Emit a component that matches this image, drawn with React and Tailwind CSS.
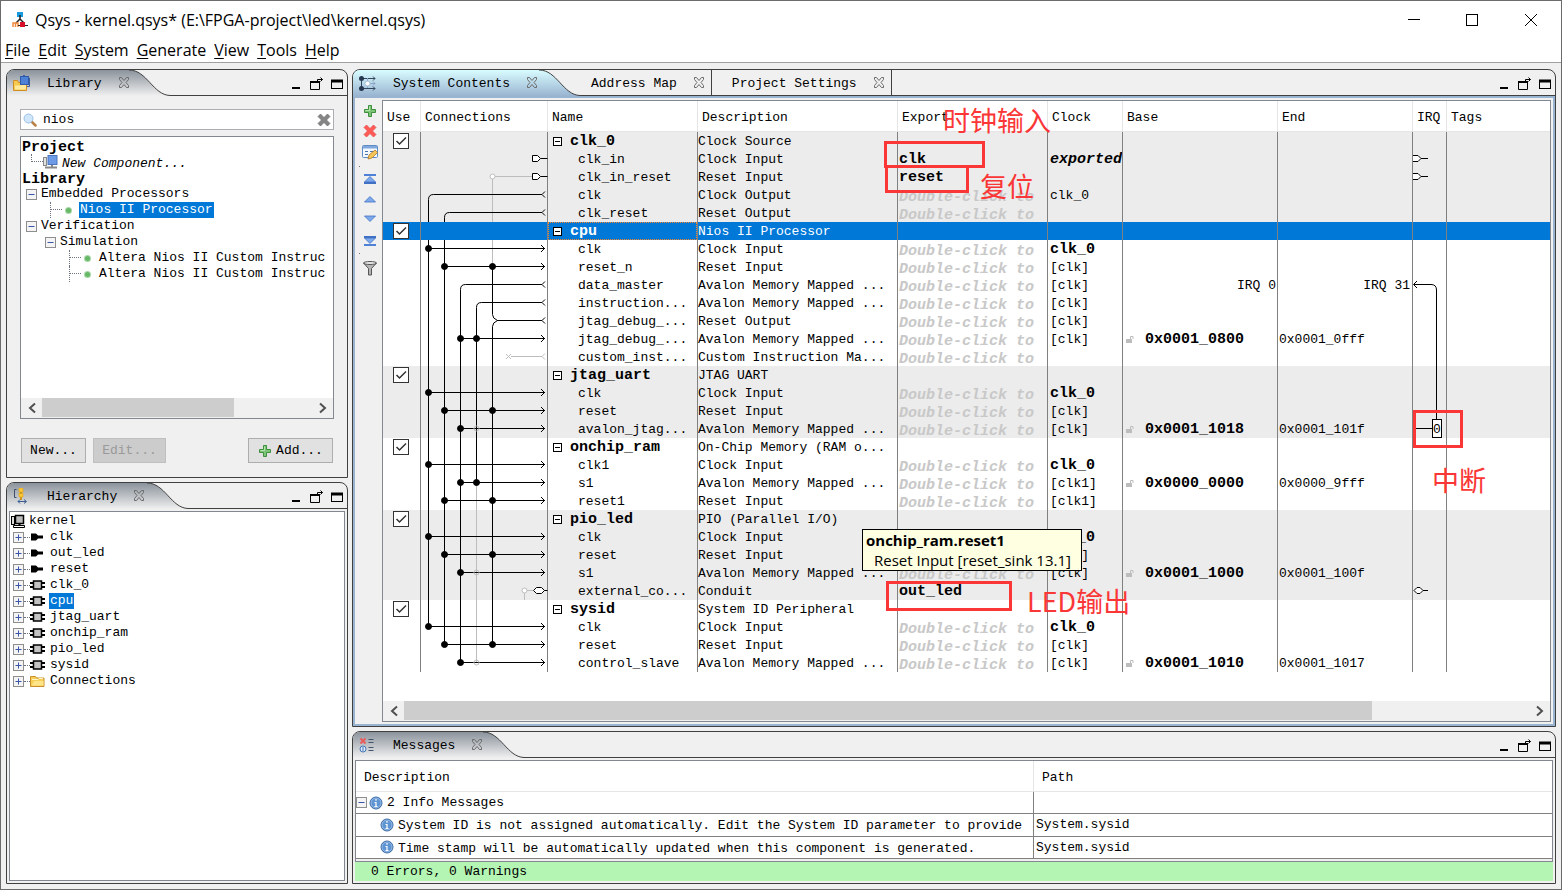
import { Fragment } from "react";

const EXPORT_HINT = "Double-click to";

const modules = [
    {
        name: "clk_0",
        description: "Clock Source",
        ports: [
            { name: "clk_in", description: "Clock Input", exported: "clk", clock: "exported", clockStyle: "exported" },
            { name: "clk_in_reset", description: "Reset Input", exported: "reset" },
            { name: "clk", description: "Clock Output", clock: "clk_0" },
            { name: "clk_reset", description: "Reset Output" },
        ],
    },
    {
        name: "cpu",
        description: "Nios II Processor",
        selected: true,
        ports: [
            { name: "clk", description: "Clock Input", clock: "clk_0", clockStyle: "bold" },
            { name: "reset_n", description: "Reset Input", clock: "[clk]" },
            { name: "data_master", description: "Avalon Memory Mapped ...", clock: "[clk]", irqFrom: "IRQ 0", irqTo: "IRQ 31" },
            { name: "instruction...", description: "Avalon Memory Mapped ...", clock: "[clk]" },
            { name: "jtag_debug_...", description: "Reset Output", clock: "[clk]" },
            { name: "jtag_debug_...", description: "Avalon Memory Mapped ...", clock: "[clk]", base: "0x0001_0800", end: "0x0001_0fff" },
            { name: "custom_inst...", description: "Custom Instruction Ma..." },
        ],
    },
    {
        name: "jtag_uart",
        description: "JTAG UART",
        ports: [
            { name: "clk", description: "Clock Input", clock: "clk_0", clockStyle: "bold" },
            { name: "reset", description: "Reset Input", clock: "[clk]" },
            { name: "avalon_jtag...", description: "Avalon Memory Mapped ...", clock: "[clk]", base: "0x0001_1018", end: "0x0001_101f" },
        ],
    },
    {
        name: "onchip_ram",
        description: "On-Chip Memory (RAM o...",
        ports: [
            { name: "clk1", description: "Clock Input", clock: "clk_0", clockStyle: "bold" },
            { name: "s1", description: "Avalon Memory Mapped ...", clock: "[clk1]", base: "0x0000_0000", end: "0x0000_9fff" },
            { name: "reset1", description: "Reset Input", clock: "[clk1]" },
        ],
    },
    {
        name: "pio_led",
        description: "PIO (Parallel I/O)",
        ports: [
            { name: "clk", description: "Clock Input", clock: "clk_0", clockStyle: "bold" },
            { name: "reset", description: "Reset Input", clock: "[clk]" },
            { name: "s1", description: "Avalon Memory Mapped ...", clock: "[clk]", base: "0x0001_1000", end: "0x0001_100f" },
            { name: "external_co...", description: "Conduit", exported: "out_led" },
        ],
    },
    {
        name: "sysid",
        description: "System ID Peripheral",
        ports: [
            { name: "clk", description: "Clock Input", clock: "clk_0", clockStyle: "bold" },
            { name: "reset", description: "Reset Input", clock: "[clk]" },
            { name: "control_slave", description: "Avalon Memory Mapped ...", clock: "[clk]", base: "0x0001_1010", end: "0x0001_1017" },
        ],
    },
];

const hierarchy = [
    { name: "clk", icon: "port" },
    { name: "out_led", icon: "port" },
    { name: "reset", icon: "port" },
    { name: "clk_0", icon: "chip" },
    { name: "cpu", icon: "chip", selected: true },
    { name: "jtag_uart", icon: "chip" },
    { name: "onchip_ram", icon: "chip" },
    { name: "pio_led", icon: "chip" },
    { name: "sysid", icon: "chip" },
    { name: "Connections", icon: "folder" },
];

const clockClasses = {
    bold: "font-bold text-[15px]",
    exported: "font-bold italic text-[15px]",
};

/**
 * Icons
 */
const CloseIcon = () => (
    <svg width="12" height="12" viewBox="0 0 12 12" fill="none" stroke="#6b6b6b" strokeWidth="1">
        <path d="M1.5 .5h2L6 3.5l2.500-3h2v2L8 5.500l2.500 3v2h-2L6 7.500l-2.500 3h-2v-2L4 5.500l-2.500-3z" />
    </svg>
);

const PlusIcon = () => (
    <svg width="14" height="14" viewBox="0 0 14 14">
        <path d="M5.500 1.500h3v4h4v3h-4v4h-3v-4h-4v-3h4z" fill="#7cc576" stroke="#3f8f3f" />
        <path d="M6.500 2.500v4H2.500" fill="none" stroke="#b5e6ae" />
    </svg>
);

const RemoveIcon = () => (
    <svg width="14" height="14" viewBox="0 0 14 14">
        <path d="M3.500 1L7 4.500 10.500 1 13 3.500 9.500 7l3.500 3.500-2.500 2.500L7 9.500 3.500 13 1 10.500 4.500 7 1 3.500z" fill="#ff5a55" stroke="#e04a4a" strokeWidth=".7" />
    </svg>
);

const ClearIcon = () => (
    <svg width="14" height="14" viewBox="0 0 14 14">
        <path d="M3.500 1L7 4.500 10.500 1 13 3.500 9.500 7l3.500 3.500-2.500 2.500L7 9.500 3.500 13 1 10.500 4.500 7 1 3.500z" fill="#858585" stroke="#6c6c6c" strokeWidth=".7" />
    </svg>
);

const EditIcon = () => (
    <svg width="16" height="16" viewBox="0 0 16 16">
        <rect x=".5" y="1.500" width="15" height="12" rx="1" fill="#f4f9ff" stroke="#5f8cc4" />
        <path d="M1 2h14v2.500H1z" fill="#7fa9dd" />
        <path d="M3 7.500h3M3 10.500h3M8 7.500h4" stroke="#4a74ac" />
        <path d="M6 15l1-4 6-5 2.500 2.500L10 14z" fill="#f6c55a" stroke="#b07a2a" strokeWidth=".8" />
    </svg>
);

const MoveIcon = ({ up, bar }) => (
    <svg width="14" height="12" viewBox="0 0 14 12">
        <g transform={up ? undefined : "matrix(1 0 0 -1 0 12)"}>
            {bar && <rect x="1" y="1" width="12" height="2" fill="#4f82d6" />}
            <path d="M7 3.500L12.500 9H1.500z" fill="#7eaaec" stroke="#3f70c4" strokeWidth=".8" />
            {bar && <path d="M1 9h12v2H1z" fill="#3f70c4" />}
        </g>
    </svg>
);

const FilterIcon = () => (
    <svg width="16" height="16" viewBox="0 0 16 16">
        <path d="M1.500 3l5 5.500V15h3V8.500l5-5.500z" fill="#b5b5b5" stroke="#555" />
        <ellipse cx="8" cy="3" rx="6.500" ry="1.500" fill="#e8e8e8" stroke="#555" />
    </svg>
);

const SearchIcon = () => (
    <svg width="14" height="14" viewBox="0 0 14 14">
        <path d="M8.500 8.500l4 4" stroke="#b98347" strokeWidth="2.500" strokeLinecap="round" />
        <circle cx="5.500" cy="5.500" r="4.500" fill="#cfe6fb" stroke="#9cc0e6" />
    </svg>
);

const FolderIcon = () => (
    <svg width="15" height="12" viewBox="0 0 15 12">
        <path d="M.5 11.500V1.500h5l1 1.500h7.500v8.500z" fill="#f7cf57" stroke="#c9902d" />
        <path d="M2 4.500h6l1-1h4" stroke="#fff5c8" fill="none" />
        <path d="M2 10L4 6h9.500v4.500H2z" fill="#ffe58a" />
    </svg>
);

const LibraryIcon = () => (
    <svg width="18" height="16" viewBox="0 0 18 16">
        <path d="M.5 15.500v-10h4l1 2h8v8z" fill="#f6c94f" stroke="#d18d24" />
        <path d="M2 10.500h5l1-1h5v5H2z" fill="#ffe99c" />
        <rect x="7.500" y="1.500" width="8" height="8" fill="#4f82d6" stroke="#2f5ca8" />
        <path d="M10 .5h2M14 11.500h2.500V3" fill="none" stroke="#3a5f9c" />
    </svg>
);

const HierarchyIcon = () => (
    <svg width="16" height="16" viewBox="0 0 16 16">
        <path d="M3.500 1.500h-2v8h2" fill="none" stroke="#3d4f6b" />
        <path d="M6 0h4v4H6zM6 5h4v4H6z" fill="#f9c834" stroke="#e0a21c" strokeWidth=".6" />
        <path d="M8 4v2M8 9v3" stroke="#d09a20" strokeWidth="2" />
        <path d="M5 13.500h8M11 11.500l2.500 2-2.500 2M7 11.500l-2 2 2 2" fill="none" stroke="#3c5c92" />
    </svg>
);

const ContentsIcon = () => (
    <svg width="18" height="16" viewBox="0 0 18 16">
        <path d="M3 3.500h13M3 13.500h13M2.500 3v10M14 1.500l2 2-2 2M14 11.500l2 2-2 2" fill="none" stroke="#33455c" />
        <path d="M8.500 3v10M9 8.500h7M14 6.500l2 2-2 2" fill="none" stroke="#8ba5c6" />
        <circle cx="2.500" cy="3.500" r="2.500" fill="#26374e" />
        <circle cx="2.500" cy="13.500" r="2.500" fill="#26374e" />
        <circle cx="8.500" cy="8.500" r="2.500" fill="#fff" stroke="#a9bfdb" />
    </svg>
);

const MessagesIcon = () => (
    <svg width="16" height="16" viewBox="0 0 16 16">
        <path d="M1.500 1.500l5 5M6.500 1.500l-5 5" stroke="#ea5b5b" strokeWidth="2" />
        <circle cx="4" cy="12" r="3" fill="#dbe9fb" stroke="#4575b5" />
        <path d="M4 10v4" stroke="#4575b5" />
        <path d="M9.500 2.500h5M9.500 5.500h5M9.500 10.500h5M9.500 13.500h5" stroke="#44546a" />
    </svg>
);

const ComponentIcon = () => (
    <svg width="15" height="14" viewBox="0 0 15 14">
        <rect x=".5" y="2.500" width="3" height="8" fill="#e3e3e3" stroke="#888" />
        <rect x="5" y=".5" width="9" height="9" fill="#6d9be6" stroke="#4a76bd" />
        <path d="M2 12.500h12M9 10v2" stroke="#888" strokeWidth="2" />
    </svg>
);

const KernelIcon = () => (
    <svg width="14" height="14" viewBox="0 0 14 14" stroke="#000">
        <rect x=".5" y="2.500" width="3" height="8" fill="#ddd" />
        <rect x="4.500" y="1.500" width="8" height="8" fill="#bdbdbd" strokeWidth="1.500" />
        <path d="M2.500 11.500h11v2h-11z" fill="#fff" />
        <path d="M8.500 9.500v2" strokeWidth="2" />
    </svg>
);

const InfoIcon = () => (
    <svg width="14" height="14" viewBox="0 0 14 14">
        <circle cx="7" cy="7" r="6" fill="#5f94d2" stroke="#3a679f" />
        <circle cx="7" cy="7" r="5" fill="none" stroke="#a9c9ec" strokeWidth=".7" />
        <path d="M7 6v4.500M7 3v1.700M5.500 6.500H7M5.500 10.500h3" stroke="#fff" strokeWidth="1.200" />
    </svg>
);

const LockIcon = () => (
    <svg width="8" height="9" viewBox="0 0 8 9">
        <rect y="4" width="6" height="4" fill="#bdbdbd" />
        <path d="M4.500 4V1.500h2.500V4" fill="none" stroke="#bdbdbd" />
    </svg>
);

const NodeIcon = ({ type }) => {
    if (type === "folder") return <FolderIcon />;
    return (
        <svg width="15" height="10" viewBox="0 0 15 10">
            {type === "port" ? (
                <path d="M1 1.500h5l2 2h5v3H8l-2 2H1z" fill="#000" />
            ) : (
                <>
                    <path d="M0 3h15M0 7h15" stroke="#000" strokeWidth="2" />
                    <rect x="3.500" y="1" width="8" height="8" fill="#c3c3c3" stroke="#000" strokeWidth="1.500" />
                </>
            )}
        </svg>
    );
};

const TreeBox = ({ open }) => (
    <svg width="11" height="11" viewBox="0 0 11 11" className="shrink-0">
        <rect x=".5" y=".5" width="10" height="10" fill="#f4f4f4" stroke="#8e8e8e" />
        <path d={open ? "M2.500 5.500h6" : "M2.500 5.500h6M5.500 2.500v6"} stroke="#3a55a8" />
    </svg>
);

const Chevron = ({ right }) => (
    <svg width="8" height="12" viewBox="0 0 8 12" fill="none" stroke="#505050" strokeWidth="2">
        <path d={right ? "M1 1.500L6 6 1 10.500" : "M7 1.500L2 6l5 4.500"} />
    </svg>
);

/**
 * Panel frame: sloped title tab, extra tabs and window buttons
 */
const PanelHeader = ({ id, icon, title, slopeAt, blue = false, children }) => (
    <div className="flex h-[26px]">
        <div className="relative shrink-0">
            <svg width={slopeAt + 41} height="26" viewBox={`0 0 ${slopeAt + 41} 26`} className="block rounded-tl-[7px]">
                <defs>
                    <linearGradient id={id} x1="0" y1="0" x2="0" y2="1">
                        <stop offset="0" stopColor={blue ? "#d9fcff" : "#8a929b"} />
                        <stop offset="1" stopColor={blue ? "#99b4d1" : "#f0f0f0"} />
                    </linearGradient>
                </defs>
                <path d={`M0 0H${slopeAt}c18 0 24 25 41 25.500V26H0z`} fill={`url(#${id})`} />
                <path d={`M${slopeAt} 0c18 0 24 25 41 25.500`} fill="none" stroke="#404040" />
            </svg>
            <div className="absolute inset-y-0 left-1.5 flex items-center gap-4">
                <span className="w-[18px]">{icon}</span>
                <h2 className="pt-0.5">{title}</h2>
                <button aria-label={`Close ${title}`}>
                    <CloseIcon />
                </button>
            </div>
        </div>
        {children}
        <div className="flex flex-1 items-center justify-end gap-1.5 border-b border-[#404040] pt-0.5 pr-[3px]">
            <button aria-label="Minimize panel">
                <svg width="14" height="14" viewBox="0 0 14 14"><path d="M3 11h8" stroke="#000" strokeWidth="2" /></svg>
            </button>
            <button aria-label="Detach panel">
                <svg width="15" height="14" viewBox="0 0 15 14" fill="none" stroke="#000">
                    <path d="M1.500 5v7.500h9V5M1 5.500h10" />
                    <path d="M1 5h10" strokeWidth="2" />
                    <path d="M8.500 4.500V2.500h5M11.500.5l2 2-2 2" />
                </svg>
            </button>
            <button aria-label="Maximize panel">
                <svg width="14" height="14" viewBox="0 0 14 14" fill="none" stroke="#000">
                    <rect x="1.500" y="3.500" width="11" height="8" />
                    <path d="M1 4h12" strokeWidth="3" />
                </svg>
            </button>
        </div>
    </div>
);

const InactiveTab = ({ title, className }) => (
    <div className={`flex items-center gap-4 border-r border-b border-[#404040] pr-1.5 ${className}`}>
        <button className="pt-0.5">{title}</button>
        <button aria-label={`Close ${title}`}>
            <CloseIcon />
        </button>
    </div>
);

const Scrollbar = ({ thumb }) => (
    <div className="flex h-5 items-stretch bg-[#f0f0f0]">
        <button aria-label="Scroll left" className="flex w-[21px] items-center justify-center">
            <Chevron />
        </button>
        <div className="flex-1">
            <div className={`h-[19px] bg-[#cdcdcd] ${thumb}`} />
        </div>
        <button aria-label="Scroll right" className="flex w-[21px] items-center justify-center">
            <Chevron right />
        </button>
    </div>
);

/**
 * Left column
 */
const LibraryLeaf = ({ children, indent }) => (
    <li className={`flex h-4 items-center ${indent}`}>
        <span className="h-4 w-3 shrink-0 self-start border-l border-dotted border-gray-500">
            <span className="block h-2 border-b border-dotted border-gray-500" />
        </span>
        <span className="mr-2 ml-1 size-[5px] shrink-0 rounded-full bg-[#68b868] ring-1 ring-[#a8d8a8]" />
        {children}
    </li>
);

const LibraryPanel = () => (
    <section className="flex h-[409px] flex-col rounded-t-[8px] border border-[#404040] bg-[#f0f0f0]">
        <PanelHeader id="tab-library" icon={<LibraryIcon />} title="Library" slopeAt={122} />
        <div className="flex flex-1 flex-col px-[13px] pt-[13px]">
            <div className="flex h-[21px] items-center gap-1.5 border border-[#abadb3] bg-white px-0.5">
                <SearchIcon />
                <input aria-label="Search library" defaultValue="nios" className="min-w-0 flex-1 outline-none" />
                <button aria-label="Clear search"><ClearIcon /></button>
            </div>
            <div className="mt-1.5 flex h-[283px] flex-col border border-[#828790] bg-white">
                <ul className="flex-1 overflow-hidden pt-px leading-4 whitespace-nowrap">
                    <li className="h-4 pl-px text-[15px] leading-5 font-bold">Project</li>
                    <li className="flex h-4 items-center pl-2.5">
                        <span className="h-2 w-3 self-start border-b border-l border-dotted border-gray-500" />
                        <ComponentIcon />
                        <span className="pt-1 pl-1 italic">New Component...</span>
                    </li>
                    <li className="h-4 pl-px text-[15px] leading-5 font-bold">Library</li>
                    <li className="flex h-4 items-center gap-1 pl-[5px]"><TreeBox open />Embedded Processors</li>
                    <LibraryLeaf indent="pl-[29px]">
                        <span className="bg-[#0078d7] px-px text-white">Nios II Processor</span>
                    </LibraryLeaf>
                    <li className="flex h-4 items-center gap-1 pl-[5px]"><TreeBox open />Verification</li>
                    <li className="flex h-4 items-center gap-1 pl-6"><TreeBox open />Simulation</li>
                    <LibraryLeaf indent="pl-12"><span className="px-px">Altera Nios II Custom Instruc</span></LibraryLeaf>
                    <LibraryLeaf indent="pl-12"><span className="px-px">Altera Nios II Custom Instruc</span></LibraryLeaf>
                </ul>
                <Scrollbar thumb="w-[71%]" />
            </div>
            <div className="mt-[19px] flex h-[25px] gap-[7px] px-px">
                <button className="w-[65px] border border-[#adadad] bg-[#e1e1e1]">New...</button>
                <button disabled className="w-[73px] border border-[#bfbfbf] bg-[#cccccc] text-[#9a9a9a]">Edit...</button>
                <button className="ml-auto flex w-[85px] items-center justify-center gap-1 border border-[#adadad] bg-[#e1e1e1]">
                    <PlusIcon />
                    Add...
                </button>
            </div>
        </div>
    </section>
);

const HierarchyPanel = () => (
    <section className="flex flex-1 flex-col rounded-t-[8px] border border-[#404040] bg-[#f0f0f0]">
        <PanelHeader id="tab-hierarchy" icon={<HierarchyIcon />} title="Hierarchy" slopeAt={140} />
        <div className="m-0.5 flex-1 border border-[#828790] bg-white">
            <div className="flex h-[17px] items-center gap-1 pl-px"><KernelIcon />kernel</div>
            <ul>
                {hierarchy.map((node) => (
                    <li key={node.name} className="flex h-4 items-center pl-[3px]">
                        <TreeBox />
                        <span className="w-[6px] border-b border-dotted border-gray-500" />
                        <NodeIcon type={node.icon} />
                        <span className={node.selected ? "ml-1 bg-[#0078d7] px-px leading-4 text-white" : "ml-1 px-px leading-4"}>
                            {node.name}
                        </span>
                    </li>
                ))}
            </ul>
        </div>
    </section>
);

/**
 * Wiring drawn over the Connections column, one 18px step per row
 */
const rowY = (row) => row * 18 + 8.5;

const wires = [
    { row: 6, dots: [7.5] },
    { row: 7, dots: [23.5, 71.5] },
    { row: 11, dots: [39.5, 55.5] },
    { row: 14, dots: [7.5] },
    { row: 15, dots: [23.5, 71.5] },
    { row: 16, dots: [39.5], open: 55.5 },
    { row: 18, dots: [7.5] },
    { row: 19, dots: [39.5, 55.5] },
    { row: 20, dots: [23.5, 71.5] },
    { row: 22, dots: [7.5] },
    { row: 23, dots: [23.5, 71.5] },
    { row: 24, dots: [39.5], open: 55.5 },
    { row: 27, dots: [7.5] },
    { row: 28, dots: [23.5, 71.5] },
    { row: 29, dots: [39.5], open: 55.5 },
];

const sources = [
    { row: 3, x: 7.5, last: 27 },
    { row: 4, x: 23.5, last: 28 },
    { row: 8, x: 39.5, last: 29 },
    { row: 9, x: 55.5, last: 19 },
];

const ConnectionsDiagram = () => (
    <svg width="127" height="540" viewBox="0 0 127 540" fill="none" stroke="#000" className="pointer-events-none absolute top-[31px] left-[38px]">
        <path d={`M71.500 ${rowY(2)}V${rowY(7)}M74 ${rowY(2)}H111M55.500 ${rowY(19)}V${rowY(29)}`} stroke="#bdbdbd" />
        <circle cx="71.500" cy={rowY(2)} r="2.500" fill="#fff" stroke="#bdbdbd" />
        {[1, 2].map((row) => (
            <path key={row} d={`M111.500 ${rowY(row) - 3}h5l3 3-3 3h-5zM119.500 ${rowY(row)}h7`} fill="#fff" />
        ))}
        {sources.map(({ row, x, last }) => (
            <path key={row} d={`M124 ${rowY(row) - 3}l-3 3 3 3M121 ${rowY(row)}H${x + 5}q-5 0-5 5V${rowY(last)}`} />
        ))}
        <path d={`M71.500 ${rowY(7)}V${rowY(10) - 6}q0 4 5 6q-5 2-5 6V${rowY(28)}M76 ${rowY(10)}H121M124 ${rowY(10) - 3}l-3 3 3 3`} />
        <path d={`M85 ${rowY(12) - 2.5}l5 5M90 ${rowY(12) - 2.5}l-5 5M90 ${rowY(12)}H121M124 ${rowY(12) - 3}l-3 3 3 3`} stroke="#bdbdbd" />
        {wires.map(({ row, dots, open }) => (
            <Fragment key={row}>
                <path d={`M${dots[0]} ${rowY(row)}H124M120 ${rowY(row) - 3.5}l3.500 3.500-3.500 3.500`} />
                {open && <circle cx={open} cy={rowY(row)} r="2.500" stroke="#bdbdbd" />}
                {dots.map((x) => (
                    <circle key={x} cx={x} cy={rowY(row)} r="3" fill="#000" />
                ))}
            </Fragment>
        ))}
        <path d={`M103.500 ${rowY(25)}V468M106 ${rowY(25)}h6`} stroke="#bdbdbd" />
        <circle cx="103.500" cy={rowY(25)} r="2.500" fill="#fff" stroke="#bdbdbd" />
        <path d={`M112.500 ${rowY(25)}l3-3h5l3 3-3 3h-5zM123.500 ${rowY(25)}h3`} fill="#fff" />
        <path d="M0 90h126v18H0z" fill="#0078d7" stroke="none" />
    </svg>
);

const IrqDiagram = () => (
    <svg width="33" height="540" viewBox="0 0 33 540" fill="none" stroke="#000" className="pointer-events-none absolute top-[31px] left-[1030px]">
        {[1, 2].map((row) => (
            <path key={row} d={`M0 ${rowY(row) - 3}h5l3 3-3 3H0M8 ${rowY(row)}h7`} fill="#fff" />
        ))}
        <path d={`M4 ${rowY(8) - 3.5}l-3.500 3.500 3.500 3.500M1 ${rowY(8)}h17q5.500 0 5.500 5.500V288M3 ${rowY(16)}h16`} />
        <rect x="19.500" y="287.500" width="9" height="18" fill="#fff" />
        <text x="20" y="301" fill="#000" stroke="none" fontSize="13">0</text>
        <path d={`M1 ${rowY(25)}l3-3h3l3 3-3 3H4zM10 ${rowY(25)}h5`} fill="#fff" />
    </svg>
);

/**
 * System contents
 */
const UseCheckbox = ({ name }) => (
    <label className="relative ml-2.5 block size-4">
        <input type="checkbox" defaultChecked aria-label={`Use ${name}`} className="block size-4 appearance-none border border-[#333] bg-white" />
        <svg viewBox="0 0 16 16" className="pointer-events-none absolute inset-0" fill="none" stroke="#333" strokeWidth="1.500">
            <path d="M3.500 8l3 3L13 4.500" />
        </svg>
    </label>
);

const Cell = ({ className = "", children }) => (
    <td className={`h-[18px] overflow-hidden border-r border-[#808080] p-0 leading-[18px] last:border-r-0 ${className}`}>{children}</td>
);

// Text sits one pixel under the row's middle
const CellText = ({ className = "", children }) => (
    <div className={`h-[18px] pt-px leading-[18px] ${className}`}>{children}</div>
);

const ModuleRows = ({ module, shaded }) => {
    const shade = shaded ? "bg-[#ececec]" : "bg-white";
    return (
        <>
            <tr className={module.selected ? "bg-[#0078d7] text-white" : shade}>
                <Cell><UseCheckbox name={module.name} /></Cell>
                <Cell />
                <Cell>
                    <div className={module.selected ? "flex h-[18px] items-center gap-2 pl-[5px] outline-1 -outline-offset-1 outline-dotted outline-[#ff8728]" : "flex h-[18px] items-center gap-2 pl-[5px]"}>
                        <button aria-label={`Collapse ${module.name}`}>
                            <svg width="9" height="9" viewBox="0 0 9 9" className="block">
                                <rect x=".5" y=".5" width="8" height="8" fill="#fff" stroke="#000" />
                                <path d="M2 4.500h5" stroke="#000" />
                            </svg>
                        </button>
                        <span className="pt-0.5 text-[15px] font-bold">{module.name}</span>
                    </div>
                </Cell>
                <Cell><CellText>{module.description}</CellText></Cell>
                <Cell /><Cell /><Cell /><Cell /><Cell /><Cell />
            </tr>
            {module.ports.map((port, idx) => (
                <tr key={idx} className={shade}>
                    <Cell />
                    <Cell />
                    <Cell><CellText className="pl-[30px]">{port.name}</CellText></Cell>
                    <Cell><CellText>{port.description}</CellText></Cell>
                    <Cell className="pl-px text-[15px] font-bold">
                        {port.exported ? (
                            <CellText>{port.exported}</CellText>
                        ) : (
                            <div className="h-[18px] leading-[23px] text-[#c8c8c8] italic">{EXPORT_HINT}</div>
                        )}
                    </Cell>
                    <Cell className={clockClasses[port.clockStyle]}>
                        <CellText className="pl-0.5">{port.clock}</CellText>
                    </Cell>
                    <Cell>
                        {port.irqFrom && <CellText className="pr-px text-right">{port.irqFrom}</CellText>}
                        {port.base && (
                            <div className="flex h-[18px] items-center gap-[11px] pl-[3px] text-[15px] font-bold">
                                <LockIcon />
                                <span className="pt-0.5">{port.base}</span>
                            </div>
                        )}
                    </Cell>
                    <Cell>
                        {port.irqTo ? (
                            <CellText className="pr-0.5 text-right">{port.irqTo}</CellText>
                        ) : (
                            <CellText className="pl-px">{port.end}</CellText>
                        )}
                    </Cell>
                    <Cell />
                    <Cell />
                </tr>
            ))}
        </>
    );
};

const columns = ["Use", "Connections", "Name", "Description", "Export", "Clock", "Base", "End", "IRQ", "Tags"];

const SystemTable = () => (
    <div className="relative flex-1 overflow-hidden">
        <table className="w-full table-fixed border-separate border-spacing-0 whitespace-nowrap">
            <colgroup>
                <col className="w-[38px]" />
                <col className="w-[127px]" />
                <col className="w-[150px]" />
                <col className="w-[200px]" />
                <col className="w-[150px]" />
                <col className="w-[75px]" />
                <col className="w-[155px]" />
                <col className="w-[135px]" />
                <col className="w-[34px]" />
                <col />
            </colgroup>
            <thead>
                <tr>
                    {columns.map((column) => (
                        <th key={column} className="h-[31px] border-r border-b border-[#e5e5e5] p-0 pt-[3px] pl-1 text-left font-normal last:border-r-0">{column}</th>
                    ))}
                </tr>
            </thead>
            <tbody>
                {modules.map((module, idx) => (
                    <ModuleRows key={module.name} module={module} shaded={idx % 2 === 0} />
                ))}
            </tbody>
        </table>
        <ConnectionsDiagram />
        <IrqDiagram />
    </div>
);

const Toolbar = () => (
    <div className="flex w-[27px] flex-col items-center gap-1.5 pt-1.5 pl-0.5">
        <button aria-label="Add"><PlusIcon /></button>
        <button aria-label="Remove"><RemoveIcon /></button>
        <button aria-label="Edit"><EditIcon /></button>
        <span className="mr-5 size-px bg-gray-500" />
        <button aria-label="Move to top"><MoveIcon up bar /></button>
        <button aria-label="Move up" className="pt-0.5"><MoveIcon up /></button>
        <button aria-label="Move down" className="pt-0.5"><MoveIcon /></button>
        <button aria-label="Move to bottom" className="pt-1"><MoveIcon bar /></button>
        <span className="mr-5 size-px bg-gray-500" />
        <button aria-label="Filter"><FilterIcon /></button>
    </div>
);

const SystemPanel = () => (
    <section className="flex flex-1 flex-col rounded-t-[8px] border border-[#404040] bg-[#f0f0f0]">
        <PanelHeader id="tab-system" icon={<ContentsIcon />} title="System Contents" slopeAt={186} blue>
            <InactiveTab title="Address Map" className="pl-[11px]" />
            <InactiveTab title="Project Settings" className="pl-5" />
        </PanelHeader>
        <div className="flex flex-1 border-2 border-[#99b4d1]">
            <Toolbar />
            <div className="mt-0.5 mr-0.5 mb-0.5 flex min-w-0 flex-1 flex-col border border-[#828790] bg-white">
                <SystemTable />
                <Scrollbar thumb="w-[86%]" />
            </div>
        </div>
    </section>
);

/**
 * Messages
 */
const messages = [
    "System ID is not assigned automatically. Edit the System ID parameter to provide",
    "Time stamp will be automatically updated when this component is generated.",
];

const MessagesPanel = () => (
    <section className="flex h-[153px] flex-col rounded-t-[8px] border border-[#404040] bg-[#f0f0f0]">
        <PanelHeader id="tab-messages" icon={<MessagesIcon />} title="Messages" slopeAt={130} />
        <div className="m-0.5 flex flex-1 flex-col">
            <div className="flex-1 border border-[#828790]">
                <table className="w-full table-fixed border-separate border-spacing-0 bg-white whitespace-nowrap">
                    <colgroup>
                        <col className="w-[678px]" />
                        <col />
                    </colgroup>
                    <thead>
                        <tr className="text-left">
                            <th className="h-[31px] border-r border-b border-[#e5e5e5] p-0 pt-[3px] pl-2 font-normal">Description</th>
                            <th className="h-[31px] border-b border-[#e5e5e5] p-0 pt-[3px] pl-2 font-normal">Path</th>
                        </tr>
                    </thead>
                    <tbody>
                        <tr>
                            <td className="h-[22px] border-r border-b border-[#808080] p-0">
                                <div className="flex items-center gap-1">
                                    <span className="flex items-center gap-0.5"><TreeBox open /><InfoIcon /></span>
                                    2 Info Messages
                                </div>
                            </td>
                            <td className="border-b border-[#808080] p-0" />
                        </tr>
                        {messages.map((message) => (
                            <tr key={message}>
                                <td className="h-[22px] overflow-hidden border-r border-b border-[#808080] p-0 pl-6">
                                    <div className="flex items-center gap-1">
                                        <span className="shrink-0"><InfoIcon /></span>
                                        <span className="pt-0.5">{message}</span>
                                    </div>
                                </td>
                                <td className="border-b border-[#808080] p-0 pl-0.5">System.sysid</td>
                            </tr>
                        ))}
                    </tbody>
                </table>
            </div>
            <div className="h-[19px] bg-[#b4f5b4] pl-4 leading-5">0 Errors, 0 Warnings</div>
        </div>
    </section>
);

/**
 * Window chrome
 */
const menus = ["File", "Edit", "System", "Generate", "View", "Tools", "Help"];

const TitleBar = () => (
    <header className="border-b border-[#a0a0a0] bg-white font-['Open_Sans',sans-serif] text-[16px]">
        <div className="flex h-[37px] items-center gap-[7px] pl-[11px]">
            <svg width="16" height="16" viewBox="0 0 16 16">
                <rect x="5" y="0" width="6" height="5" fill="#1a9be0" />
                <path d="M8 3v4M8 7L4 11M8 7l4 4" stroke="#222" strokeWidth="1.500" />
                <path d="M1 15v-4h5v4M3.500 11v4" fill="none" stroke="#f08a3c" strokeWidth="1.500" />
                <rect x="8" y="10" width="5" height="5" fill="#d8102a" />
                <path d="M6 13.500h2M13 13.500h3" stroke="#222" />
            </svg>
            <h1>Qsys - kernel.qsys* (E:\FPGA-project\led\kernel.qsys)</h1>
            <div className="ml-auto flex h-full">
                <button aria-label="Minimize" className="flex w-[58px] items-center justify-center">
                    <svg width="12" height="12" viewBox="0 0 12 12"><path d="M0 5.500h12" stroke="#000" /></svg>
                </button>
                <button aria-label="Maximize" className="flex w-[58px] items-center justify-center">
                    <svg width="12" height="12" viewBox="0 0 12 12"><rect x=".5" y=".5" width="11" height="11" fill="none" stroke="#000" /></svg>
                </button>
                <button aria-label="Close" className="flex w-[60px] items-center justify-center">
                    <svg width="12" height="12" viewBox="0 0 12 12"><path d="M0 0l12 12M12 0L0 12" stroke="#000" /></svg>
                </button>
            </div>
        </div>
        <nav className="flex h-6 items-center gap-2 pl-1">
            {menus.map((menu) => (
                <button key={menu}>
                    <span className="underline underline-offset-2">{menu[0]}</span>
                    {menu.slice(1)}
                </button>
            ))}
        </nav>
    </header>
);

/**
 * Tooltip and red markup lying over the system table
 */
const Overlays = () => (
    <div className="pointer-events-none absolute -inset-px font-['Noto_Sans_CJK_SC',sans-serif] text-[27px] leading-8 whitespace-nowrap text-[#fa3636]">
        <div className="absolute top-[141px] left-[884px] h-[27px] w-[101px] border-3 border-current" />
        <div className="absolute top-[165px] left-[885px] h-7 w-[84px] border-3 border-current" />
        <div className="absolute top-[410px] left-[1413px] h-[38px] w-[50px] border-3 border-current" />
        <div className="absolute top-[581px] left-[886px] h-[30px] w-[126px] border-3 border-current" />
        <span className="absolute top-[104px] left-[943px]">时钟输入</span>
        <span className="absolute top-[170px] left-[980px]">复位</span>
        <span className="absolute top-[464px] left-[1432px]">中断</span>
        <span className="absolute top-[585px] left-[1027px]">LED输出</span>
        <div role="tooltip" className="absolute top-[529px] left-[862px] h-[42px] w-[220px] border border-black bg-[#ffffe1] pl-[3px] font-['Open_Sans',sans-serif] text-[15px] leading-5 text-black">
            <p className="font-bold">onchip_ram.reset1</p>
            <p className="pl-2">Reset Input [reset_sink 13.1]</p>
        </div>
    </div>
);

export default function App() {
    return (
        <div className="relative flex min-h-screen flex-col border border-[#6b6b6b] bg-[#f0f0f0] font-['Liberation_Mono',monospace] text-[13px] text-black">
            <TitleBar />
            <main className="flex flex-1 gap-1 pt-1.5 pr-[5px] pb-[5px] pl-[5px]">
                <div className="flex w-[342px] shrink-0 flex-col gap-1">
                    <LibraryPanel />
                    <HierarchyPanel />
                </div>
                <div className="flex min-w-0 flex-1 flex-col gap-1">
                    <SystemPanel />
                    <MessagesPanel />
                </div>
            </main>
            <Overlays />
        </div>
    );
}
